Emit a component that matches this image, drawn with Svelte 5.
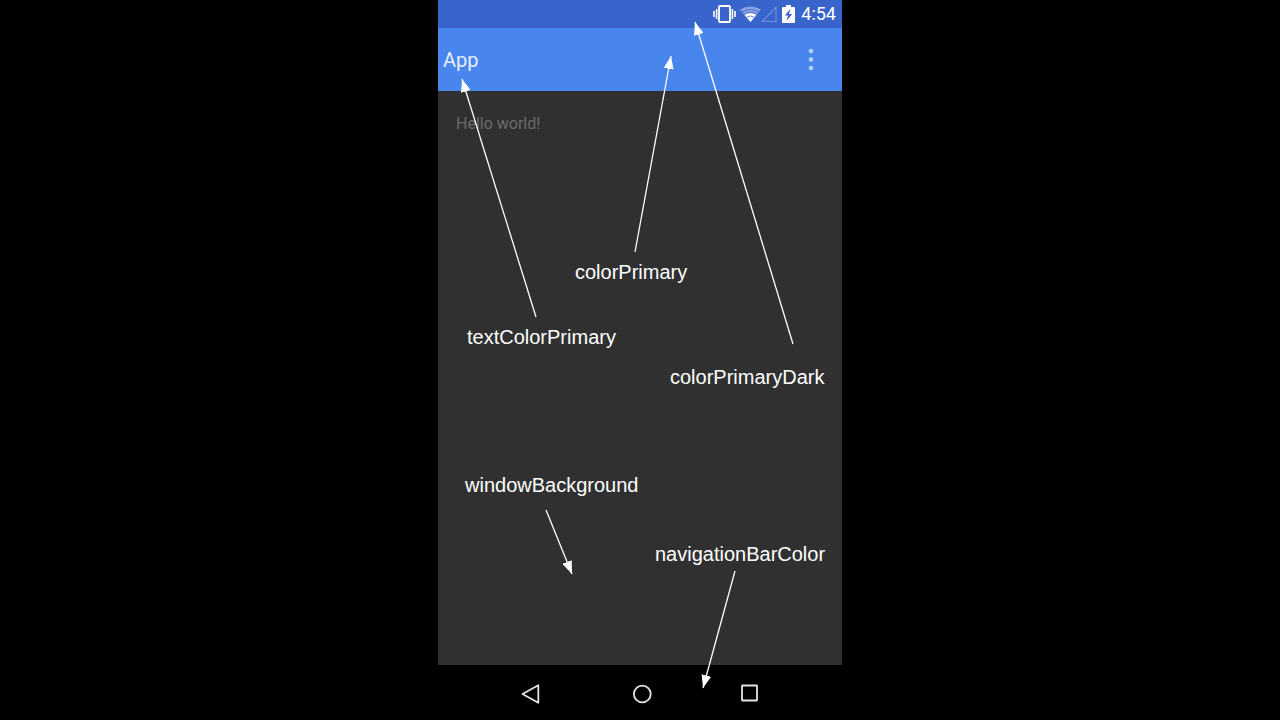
<script lang="ts">
    // Coordenadas sobre el lienzo de 404 x 720 del teléfono
    const notes = [
        { name: 'colorPrimary', x: 137, y: 279, line: [197, 252, 233, 56] },
        { name: 'textColorPrimary', x: 29, y: 344, line: [98, 317, 24, 79] },
        { name: 'colorPrimaryDark', x: 232, y: 384, line: [355, 344, 257, 22] },
        { name: 'windowBackground', x: 27, y: 492, line: [108, 510, 134, 574] },
        { name: 'navigationBarColor', x: 217, y: 561, line: [297, 571, 265, 688] }
    ];
</script>

<main class="stage">
    <div class="phone">
        <header class="status-bar">
            <svg class="vibrate" width="24" height="18" viewBox="0 0 24 18" aria-hidden="true">
                <rect x="7" y="1" width="11" height="16" rx="1" fill="none" stroke="#fff" stroke-width="1.8" />
                <path d="M4.6 4v10M20.4 4v10M2 6v6M23 6v6" stroke="#fff" stroke-width="1.6" />
            </svg>
            <svg class="wifi" width="21" height="18" viewBox="0 0 21 18" aria-hidden="true">
                <path d="M0 4.5Q10.5-1.5 21 4.5L10.5 17Z" fill="#8ba3e2" />
                <path d="M4.5 10Q10.5 6 16.5 10L10.5 17Z" fill="#fff" />
                <path d="M2 7Q10.5 2 19 7M4 9.5Q10.5 5.4 17 9.5M6.4 12.4Q10.5 9.6 14.6 12.4" fill="none" stroke="#3964cb" stroke-width="0.8" />
            </svg>
            <svg class="signal" width="16" height="18" viewBox="0 0 16 18" aria-hidden="true">
                <path d="M15 2V16.5H1Z" fill="none" stroke="#7390de" stroke-width="1.1" />
            </svg>
            <svg class="battery" width="13" height="20" viewBox="0 0 13 20" aria-hidden="true">
                <path d="M4 1h5v2h3a1 1 0 0 1 1 1v14a1 1 0 0 1-1 1H1a1 1 0 0 1-1-1V4a1 1 0 0 1 1-1h3Z" fill="#fff" />
                <path d="M8.5 5L2.8 11.6H6L4.5 17L10.2 10H7Z" fill="#3964cb" />
            </svg>
            <time>4:54</time>
        </header>

        <div class="toolbar">
            <h1>App</h1>
            <button class="more" aria-label="More options">
                <svg width="6" height="24" viewBox="0 0 6 24" fill="#b5d2f8">
                    <circle cx="3" cy="3" r="2.3" />
                    <circle cx="3" cy="11.5" r="2.3" />
                    <circle cx="3" cy="20" r="2.3" />
                </svg>
            </button>
        </div>

        <section class="window">
            <p>Hello world!</p>
        </section>

        <nav class="nav-bar">
            <button aria-label="Back">
                <svg width="24" height="24" viewBox="0 0 24 24">
                    <path d="M2.5 12L18.3 3.2V20.8Z" />
                </svg>
            </button>
            <button aria-label="Home">
                <svg width="24" height="24" viewBox="0 0 24 24">
                    <circle cx="12.3" cy="12" r="8.4" />
                </svg>
            </button>
            <button aria-label="Recent apps">
                <svg width="24" height="24" viewBox="0 0 24 24">
                    <rect x="2" y="3.5" width="15" height="15" rx="0.5" />
                </svg>
            </button>
        </nav>

        <svg class="notes" viewBox="0 0 404 720">
            <defs>
                <marker id="arrow" viewBox="0 0 13 10" refX="13" refY="5" markerWidth="13" markerHeight="10" markerUnits="userSpaceOnUse" orient="auto">
                    <path d="M0 0L13 5L0 10Z" fill="#fff" />
                </marker>
            </defs>
            {#each notes as { name, x, y, line } (name)}
                <line x1={line[0]} y1={line[1]} x2={line[2]} y2={line[3]} marker-end="url(#arrow)" />
                <text {x} {y}>{name}</text>
            {/each}
        </svg>
    </div>
</main>

<style>
    :global(body) {
        background: #000;
    }

    .stage {
        display: flex;
        justify-content: center;
        min-height: 100vh;
        background: #000;
    }

    .phone {
        position: relative;
        display: flex;
        flex-direction: column;
        height: 100vh;
        aspect-ratio: 404 / 720;
        font-family: Roboto, sans-serif;
    }

    .status-bar {
        display: flex;
        align-items: center;
        justify-content: flex-end;
        height: 28px;
        padding-right: 6px;
        background: #3964cb;
        color: #fff;
    }

    .wifi {
        margin-left: 4px;
    }

    .battery {
        margin: 0 6px 0 5px;
    }

    time {
        font-size: 18px;
        line-height: 28px;
    }

    .toolbar {
        display: flex;
        align-items: center;
        justify-content: space-between;
        height: 63px;
        padding: 0 19px 0 5px;
        background: #4885ed;
    }

    h1 {
        margin: 0;
        font-size: 20px;
        font-weight: 400;
        line-height: 24px;
        color: #e6f0fd;
    }

    button {
        display: flex;
        align-items: center;
        justify-content: center;
        padding: 0;
        border: 0;
        background: none;
        cursor: pointer;
    }

    .more {
        width: 24px;
        height: 48px;
    }

    .window {
        flex: 1;
        padding: 21px 18px;
        background: #303030;
    }

    p {
        margin: 0;
        font-size: 16px;
        line-height: 24px;
        color: #6b6b6b;
    }

    .nav-bar {
        display: flex;
        justify-content: center;
        box-sizing: border-box;
        height: 55px;
        padding: 2px 0 0 4px;
        background: #000;
    }

    .nav-bar button {
        width: 110px;
    }

    .nav-bar svg {
        fill: none;
        stroke: #e4e4e4;
        stroke-width: 1.8;
        stroke-linejoin: round;
    }

    .notes {
        position: absolute;
        inset: 0;
        width: 100%;
        height: 100%;
        pointer-events: none;
    }

    .notes line {
        stroke: #fff;
        stroke-width: 1.3;
    }

    .notes text {
        fill: #fff;
        font-family: "Liberation Sans", Arial, sans-serif;
        font-size: 20px;
    }
</style>
